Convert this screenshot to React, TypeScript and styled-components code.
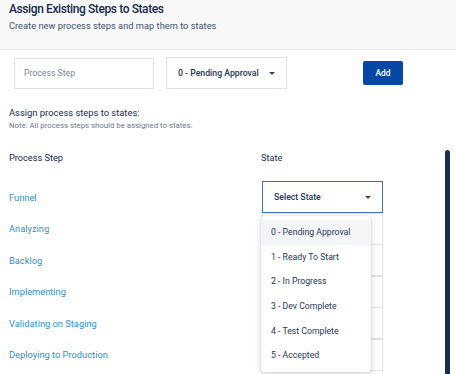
import React from "react";
import styled, { createGlobalStyle } from "styled-components";

const GlobalStyle = createGlobalStyle`
  html, body { margin: 0; padding: 0; background: #ffffff; }
  body { font-family: Roboto, "Liberation Sans", Arial, sans-serif; color: #172b4d; width: 456px; height: 374px; overflow: hidden; }
  * { box-sizing: border-box; }
`;

const Page = styled.div`
  display: flex;
  flex-direction: column;
  width: 456px;
  height: 374px;
  overflow: hidden;
`;

const Header = styled.header`
  height: 50px;
  padding: 1px 9px 0;
  background: #f8f8f9;
  border-bottom: 1px solid #e6e7ea;
`;

const Title = styled.h1`
  margin: 0;
  font-size: 12px;
  line-height: 17px;
  font-weight: 500;
  letter-spacing: -0.4px;
  color: #172b4d;
`;

const Subtitle = styled.p`
  margin: 2px 0 0;
  font-size: 9.3px;
  line-height: 12px;
  color: #42526e;
`;

const FormRow = styled.div`
  display: flex;
  align-items: center;
  padding: 7px 0 0 14px;
`;

const TextInput = styled.div`
  width: 140px;
  height: 31px;
  border: 1px solid #dfe1e6;
  display: flex;
  align-items: center;
  padding-left: 9px;
  font-size: 8.7px;
  color: #7a869a;
`;

const SelectBox = styled.div<{ $w: number; $active?: boolean; $ml?: number }>`
  position: relative;
  width: ${(p) => p.$w}px;
  height: 32px;
  margin-left: ${(p) => p.$ml ?? 0}px;
  border: 1px solid ${(p) => (p.$active ? "#4271c4" : "#dfe1e6")};
  display: flex;
  align-items: center;
  justify-content: space-between;
  padding: 0 11px 0 11px;
  font-size: 8.7px;
  font-weight: 500;
  white-space: nowrap;
  color: #253858;
  background: #fff;
`;

const Caret = styled.span`
  width: 0;
  height: 0;
  border-left: 3px solid transparent;
  border-right: 3px solid transparent;
  border-top: 3px solid #344563;
`;

const AddButton = styled.button`
  margin-left: 76px;
  width: 40px;
  height: 24px;
  border: none;
  border-radius: 2px;
  background: #0747a6;
  color: #fff;
  font-family: inherit;
  font-size: 8.4px;
  font-weight: 500;
  padding: 0;
`;

const SectionTitle = styled.div`
  margin: 17px 0 0 9px;
  font-size: 9.4px;
  line-height: 13px;
  color: #172b4d;
`;

const Note = styled.div`
  margin: 1px 0 0 9px;
  font-size: 7.8px;
  line-height: 11px;
  color: #6b778c;
`;

const TableArea = styled.div`
  display: flex;
  flex: 1;
  margin-top: 14px;
  min-height: 0;
`;

const Table = styled.div`
  flex: 1;
  padding-left: 9px;
`;

const HeadRow = styled.div`
  display: grid;
  grid-template-columns: 252px 1fr;
  height: 24px;
  align-items: center;
  font-size: 9.2px;
  color: #172b4d;
`;

const Row = styled.div`
  display: grid;
  grid-template-columns: 252px 1fr;
  height: 31.6px;
  align-items: center;
`;

const FirstRow = styled(Row)`
  margin-top: 12px;
`;

const StepLink = styled.a`
  font-size: 9.3px;
  color: #2f8fd0;
  text-decoration: none;
`;

const Cell = styled.div`
  position: relative;
  margin-left: 1px;
`;

const Menu = styled.div`
  position: absolute;
  top: 35px;
  left: -1px;
  width: 110px;
  padding: 4px 0;
  background: #fff;
  border-radius: 3px;
  box-shadow: 0 2px 6px rgba(9, 30, 66, 0.2), 0 0 1px rgba(9, 30, 66, 0.25);
  z-index: 10;
`;

const MenuItem = styled.div<{ $hl?: boolean }>`
  height: 24.6px;
  display: flex;
  align-items: center;
  padding-left: 10px;
  font-size: 8.7px;
  color: #253858;
  background: ${(p) => (p.$hl ? "#f4f5f7" : "transparent")};
`;

const ScrollTrack = styled.div`
  width: 11px;
  display: flex;
  justify-content: flex-start;
  padding-top: 5px;
`;

const Thumb = styled.div`
  width: 5px;
  height: 100%;
  border-radius: 3px 3px 0 0;
  background: #1b2f55;
`;

const steps = [
  "Funnel",
  "Analyzing",
  "Backlog",
  "Implementing",
  "Validating on Staging",
  "Deploying to Production",
];

const states = [
  "0 - Pending Approval",
  "1 - Ready To Start",
  "2 - In Progress",
  "3 - Dev Complete",
  "4 - Test Complete",
  "5 - Accepted",
];

export default function App() {
  return (
    <Page>
      <GlobalStyle />
      <Header>
        <Title>Assign Existing Steps to States</Title>
        <Subtitle>Create new process steps and map them to states</Subtitle>
      </Header>
      <FormRow>
        <TextInput>Process Step</TextInput>
        <SelectBox $w={121} $ml={12}>
          0 - Pending Approval
          <Caret />
        </SelectBox>
        <AddButton>Add</AddButton>
      </FormRow>
      <SectionTitle>Assign process steps to states:</SectionTitle>
      <Note>Note: All process steps should be assigned to states.</Note>
      <TableArea>
        <Table>
          <HeadRow>
            <span>Process Step</span>
            <span>State</span>
          </HeadRow>
          {steps.map((s, i) => {
            const R = i === 0 ? FirstRow : Row;
            return (
              <R key={s}>
                <StepLink href="#">{s}</StepLink>
                <Cell>
                  <SelectBox $w={121} $active={i === 0}>
                    {i === 0 ? "Select State" : ""}
                    <Caret />
                  </SelectBox>
                  {i === 0 && (
                    <Menu>
                      {states.map((st, j) => (
                        <MenuItem key={st} $hl={j === 0}>
                          {st}
                        </MenuItem>
                      ))}
                    </Menu>
                  )}
                </Cell>
              </R>
            );
          })}
        </Table>
        <ScrollTrack>
          <Thumb />
        </ScrollTrack>
      </TableArea>
    </Page>
  );
}
